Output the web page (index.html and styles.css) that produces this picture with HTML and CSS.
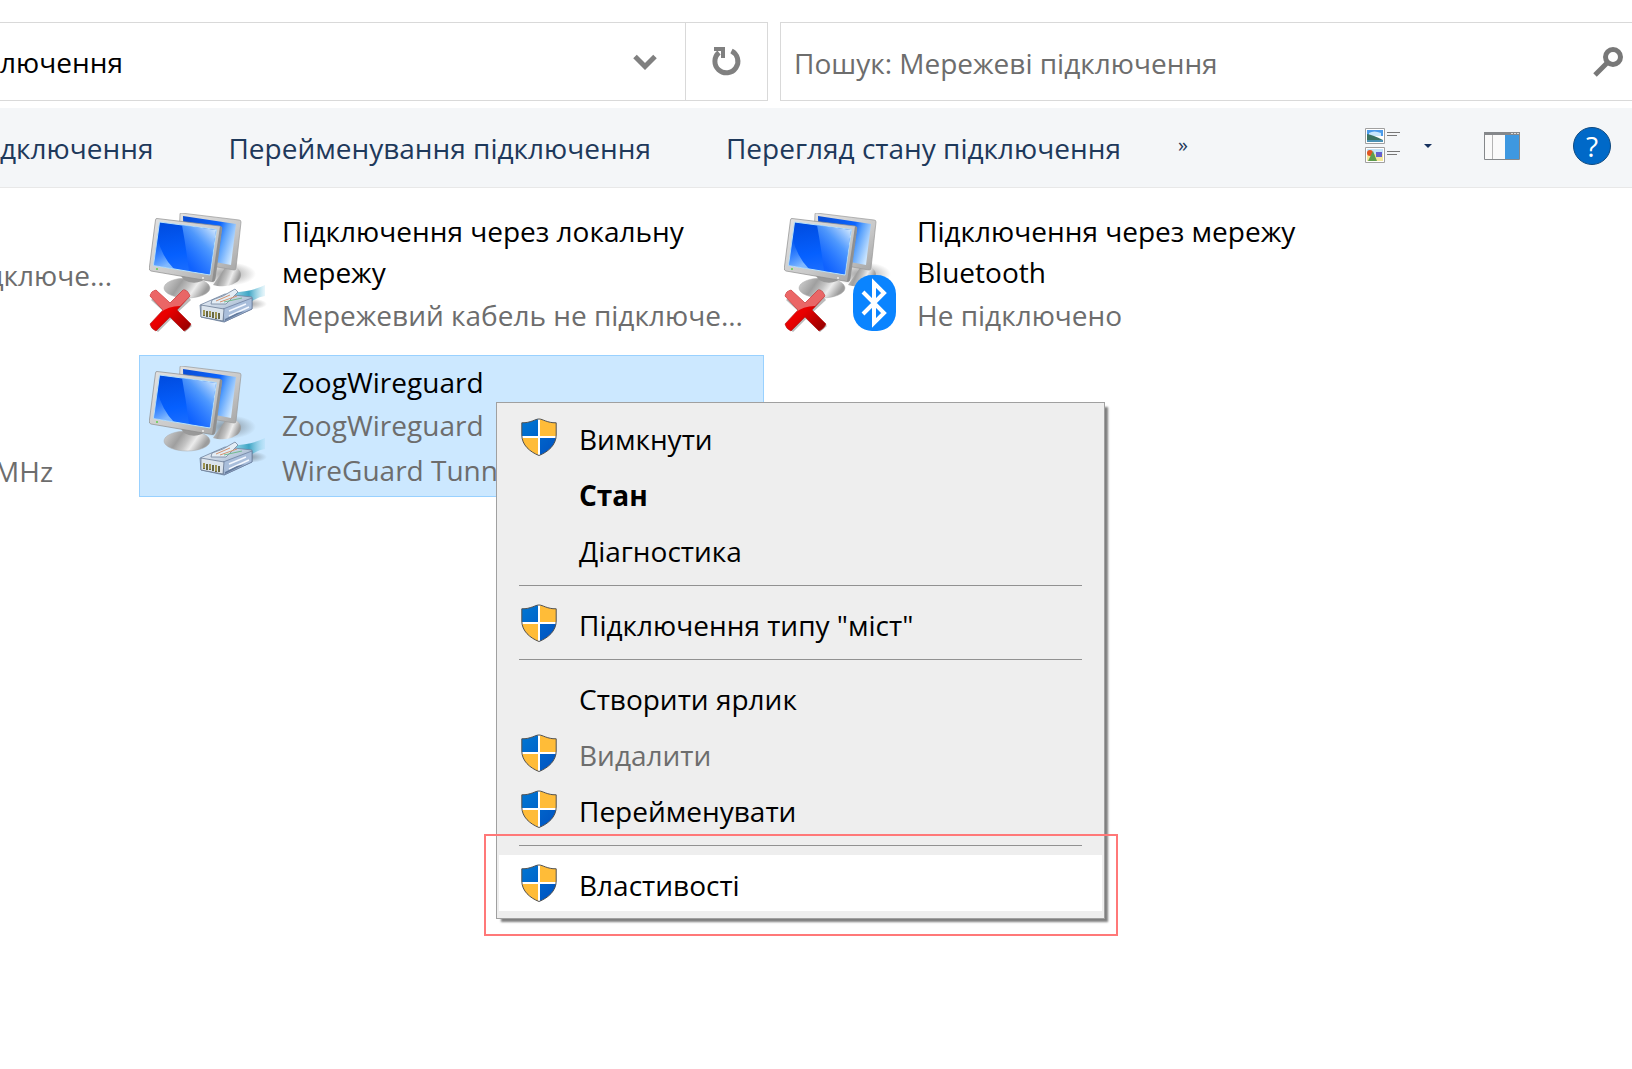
FILE: index.html
```html
<!DOCTYPE html>
<html lang="uk">
<head>
    <meta charset="UTF-8">
    <title>Мережеві підключення</title>
<link rel="stylesheet" href="styles.css">
</head>
<body>
<svg class="defs" aria-hidden="true">
    <defs>
        <linearGradient id="screen" x1="0" y1="0.3" x2="1" y2="0.6">
            <stop offset="0" stop-color="#0a4fd8"/>
            <stop offset="0.6" stop-color="#0a64ff"/>
            <stop offset="0.75" stop-color="#5aa2fc"/>
            <stop offset="1" stop-color="#cfe8ff"/>
        </linearGradient>
        <linearGradient id="screen_front" x1="0.3" y1="0" x2="0.5" y2="1">
            <stop offset="0" stop-color="#004ce0"/>
            <stop offset="0.6" stop-color="#0560ff"/>
            <stop offset="1" stop-color="#1f70ff"/>
        </linearGradient>
        <linearGradient id="glare" x1="0.95" y1="0" x2="0.3" y2="0.9">
            <stop offset="0" stop-color="#e4f3ff"/>
            <stop offset="0.45" stop-color="#62a8ff" stop-opacity="0.8"/>
            <stop offset="1" stop-color="#0a5cff" stop-opacity="0.6"/>
        </linearGradient>
        <linearGradient id="low_light" x1="0" y1="0.2" x2="0.3" y2="1">
            <stop offset="0" stop-color="#4c94ff" stop-opacity="0.1"/>
            <stop offset="1" stop-color="#9ccdff" stop-opacity="0.8"/>
        </linearGradient>
        <linearGradient id="frame" x1="0" y1="0" x2="1" y2="1">
            <stop offset="0" stop-color="#e2e2e2"/>
            <stop offset="0.6" stop-color="#c9c9c9"/>
            <stop offset="1" stop-color="#a4a4a4"/>
        </linearGradient>
        <linearGradient id="stand" x1="0" y1="0" x2="1" y2="0.3">
            <stop offset="0" stop-color="#d6d6d6"/>
            <stop offset="0.4" stop-color="#9f9f9f"/>
            <stop offset="0.6" stop-color="#c4c4c4"/>
            <stop offset="0.75" stop-color="#ececec"/>
            <stop offset="1" stop-color="#9c9c9c"/>
        </linearGradient>
        <radialGradient id="shadow">
            <stop offset="0" stop-color="#333" stop-opacity="0.5"/>
            <stop offset="1" stop-color="#333" stop-opacity="0"/>
        </radialGradient>
        <linearGradient id="cable" x1="0" y1="0" x2="1" y2="0">
            <stop offset="0" stop-color="#9bd9ea"/>
            <stop offset="0.5" stop-color="#3fa5c4"/>
            <stop offset="1" stop-color="#8fd4ea" stop-opacity="0.2"/>
        </linearGradient>
        <linearGradient id="plug" x1="0" y1="0" x2="1" y2="1">
            <stop offset="0" stop-color="#f4f8fc"/>
            <stop offset="0.5" stop-color="#b9c9dc"/>
            <stop offset="1" stop-color="#7189a9"/>
        </linearGradient>
        <linearGradient id="red" x1="0" y1="0" x2="1" y2="1">
            <stop offset="0" stop-color="#f00"/>
            <stop offset="0.5" stop-color="#e80000"/>
            <stop offset="1" stop-color="#8c0000"/>
        </linearGradient>
        <linearGradient id="blue_quarter" x1="0" y1="0" x2="1" y2="1">
            <stop offset="0" stop-color="#0078d4"/>
            <stop offset="1" stop-color="#0050c0"/>
        </linearGradient>
        <clipPath id="shield_clip"><path d="M18 1C22 1 26 5 35.200 4.800V17C35.200 27 27 34 18 37.500C9 34 .8 27 .8 17V4.800C10 5 14 1 18 1Z"/></clipPath>
    </defs>
    <symbol id="monitors" viewBox="0 0 120 120">
        <ellipse cx="78" cy="61" rx="29" ry="12" fill="url(#shadow)"/>
        <path d="M78 52L88 55C94 59 93 67 86 70C80 74 71 74 64 72Z" fill="url(#stand)"/>
        <path d="M31 1Q31 0 32 0L90 7Q92 7 92 9L87 55Q87 57 85 57L29 47Z" fill="url(#frame)" stroke="#999" stroke-width="0.700"/>
        <path d="M34 3L87 11L82 52L35 43Z" fill="url(#screen)"/>
        <ellipse cx="38" cy="75" rx="23" ry="10" fill="url(#stand)" stroke="#aaa" stroke-width="0.500"/>
        <path d="M30 60H60L53 68Q44 72 35 67Z" fill="#999"/>
        <path d="M8 5.500L71 13L73 14.500L66 66Q65.500 69 63 68.500L2 58Q0 57.500 .3 55L6.500 7Q6.700 5.300 8 5.500Z" fill="url(#frame)" stroke="#8c8c8c" stroke-width="0.700"/>
        <path d="M71 13L73 14.500L66 66Q65.500 69 63 68.500Z" fill="#8f8f8f"/>
        <path d="M10.500 9L67.500 16.500L61 62L4.500 52.500Z" fill="url(#screen_front)" stroke="#b9e2fa"/>
        <path d="M33 12L67 17L61 61L40 58Q37 34 33 12Z" fill="url(#glare)"/>
        <path d="M8 24Q13 44 25 56L5 52.500Z" fill="url(#low_light)"/>
        <circle cx="8" cy="56" r="1" fill="#5fd14a"/>
        <circle cx="54" cy="65" r="1" fill="#eee"/>
    </symbol>
    <symbol id="ethernet" viewBox="0 0 68 42">
        <ellipse cx="48" cy="20" rx="20" ry="6" fill="url(#shadow)"/>
        <path d="M34 8Q52 8 66 1V12Q57 13 47 22L38 18Z" fill="url(#cable)"/>
        <path d="M1 21L26 10L53 13V25L25 38L2 33Z" fill="url(#plug)" stroke="#6f83a0" stroke-width="0.800"/>
        <path d="M24 25L53 14V25L25 38Z" fill="#a9bedb" stroke="#66799a" stroke-width="0.700"/>
        <path d="M2 21L25 25L24 37L2 33Z" fill="#dbe4ed" stroke="#5d6f88" stroke-width="0.700"/>
        <path d="M13 16L24 12L36 5L39 8L31 16L27 20L12 20Z" fill="#e3edf5" stroke="#71839c" stroke-width="0.800"/>
        <path d="M17 17L31 11M21 18L38 12" stroke="#d49370"/>
        <path d="M25 18L43 14" stroke="#70b98f"/>
        <path d="M5 26V32M8 27V33M11 27V33M14 28V34M17 28V35M20 29V35" stroke="#5b5a31" stroke-width="1.800"/>
        <path d="M5 26V31M11 27V32M17 28V34" stroke="#dac45e"/>
        <path d="M30 27L47 20M30 32L50 23" stroke="#f4f8ff" stroke-width="1.500"/>
        <path d="M26 35L38 29L46 27L26 37Z" fill="#637a9c"/>
    </symbol>
    <symbol id="cross" viewBox="0 0 44 46">
        <path d="M9 5L22 18L36 5L42 12L29 24L43 38L36 44L22 31L9 44L2 38L15 24L2 12Z" fill="#555" opacity="0.400"/>
        <path d="M7 2L21 15L34 2Q38 1 41 8L28 22L42 36Q40 41 35 43L21 29L7 43Q2 41 1 36L14 22L1 8Q2 3 7 2Z" fill="url(#red)" stroke="#b02020" stroke-width="0.700"/>
        <path d="M7 2L21 15L34 2Q38 1 41 8L31 18Q19 18 11 25L14 22L1 8Q2 3 7 2Z" fill="#e98080" opacity="0.800"/>
    </symbol>
    <symbol id="bluetooth" viewBox="0 0 43 56">
        <rect width="43" height="56" rx="19" fill="#0a84ff"/>
        <path d="M10 17L31 38L21 48V8L31 18L10 39" fill="none" stroke="#fff" stroke-width="4"/>
    </symbol>
    <symbol id="shield" viewBox="0 0 36 38">
        <g clip-path="url(#shield_clip)">
            <rect width="36" height="38" fill="#fff"/>
            <path d="M0 0H17V18H0ZM19 20H36V38H19Z" fill="url(#blue_quarter)"/>
            <path d="M19 0H36V18H19ZM0 20H17V38H0Z" fill="#ffbc38"/>
        </g>
        <path d="M18 1C22 1 26 5 35.200 4.800V17C35.200 27 27 34 18 37.500C9 34 .8 27 .8 17V4.800C10 5 14 1 18 1Z" fill="none" stroke="#505050"/>
    </symbol>
</svg>
<header class="nav_bar">
    <div class="address">
        <span class="address_text">лючення</span>
        <button class="history" aria-label="Попередні розташування">
            <svg width="24" height="16" viewBox="0 0 24 16"><path d="M2 2.500L12 12.500L22 2.500" fill="none" stroke="#808080" stroke-width="5"/></svg>
        </button>
        <button class="refresh" aria-label="Оновити">
            <svg width="30" height="30" viewBox="0 0 30 30"><path d="M19.500 4A11.500 11.500 0 1 1 7 5.500" fill="none" stroke="#808080" stroke-width="5"/><path d="M2 0H13V11H9V4H2Z" fill="#808080"/></svg>
        </button>
    </div>
    <div class="search">
        <input type="search" aria-label="Пошук" placeholder="Пошук: Мережеві підключення">
        <button aria-label="Шукати">
            <svg width="30" height="30" viewBox="0 0 30 30"><circle cx="20" cy="10" r="7.500" fill="none" stroke="#787878" stroke-width="5"/><path d="M14.500 15.500L2 28" stroke="#787878" stroke-width="5"/></svg>
        </button>
    </div>
</header>
<nav class="toolbar">
    <button>дключення</button>
    <button>Перейменування підключення</button>
    <button>Перегляд стану підключення</button>
    <button class="more">»</button>
    <div class="tools">
        <button aria-label="Подання">
            <svg width="36" height="36" viewBox="0 0 36 36">
                <g fill="#fff" stroke="#a0a0a0"><path d="M.5 .5H19.500V15.500H.5ZM.5 19.500H19.500V34.500H.5Z"/></g>
                <path d="M2 2H18V8H2Z" fill="#4b9bea"/><path d="M4 5Q9 2 16 5V8H4Z" fill="#c9e6fb"/>
                <path d="M2 6Q8 7 18 12V14H2Z" fill="#3c7260"/><path d="M2 12H18V14H2Z" fill="#4a91b4"/>
                <path d="M2 21H18V33H2Z" fill="#f2e79b"/><path d="M2 21H18V26H2Z" fill="#c5e4f8"/>
                <rect x="11" y="24" width="6" height="5" fill="#6560cc"/><circle cx="5" cy="25" r="3" fill="#e25420"/><path d="M3 33L8 23L12 33Z" fill="#5e9c4d"/>
                <path d="M22 4.500H35M22 7.500H32M22 23.500H35M22 26.500H32" stroke="#777"/>
            </svg>
        </button>
        <button class="drop" aria-label="Інші подання">
            <svg width="8" height="4" viewBox="0 0 8 4"><path d="M0 0H8L4 4Z" fill="#15305e"/></svg>
        </button>
        <button class="pane" aria-label="Область перегляду">
            <svg width="36" height="28" viewBox="0 0 36 28">
                <path d="M.5 .5H35.500V27.500H.5Z" fill="#fafafa" stroke="#85888b"/>
                <path d="M0 0H36V3H0Z" fill="#85888b"/><path d="M27 1H29V2H27ZM30 1H32V2H30ZM33 1H35V2H33Z" fill="#ddd"/>
                <path d="M8.500 3V27" stroke="#b4b4b4"/><path d="M21 3H35V27H21Z" fill="#3e98e0"/>
            </svg>
        </button>
        <button class="help" aria-label="Довідка">?</button>
    </div>
</nav>
<main class="connections">
    <section class="tile clipped"><p class="detail">дключе...</p></section>
    <section class="tile">
        <div class="icon">
            <svg class="monitors"><use href="#monitors"/></svg>
            <svg class="cross"><use href="#cross"/></svg>
            <svg class="ethernet"><use href="#ethernet"/></svg>
        </div>
        <div class="info">
            <h2>Підключення через локальну мережу</h2>
            <p class="detail">Мережевий кабель не підключе...</p>
        </div>
    </section>
    <section class="tile">
        <div class="icon">
            <svg class="monitors"><use href="#monitors"/></svg>
            <svg class="cross"><use href="#cross"/></svg>
            <svg class="bluetooth"><use href="#bluetooth"/></svg>
        </div>
        <div class="info">
            <h2>Підключення через мережу Bluetooth</h2>
            <p class="detail">Не підключено</p>
        </div>
    </section>
    <section class="tile clipped adapter"><p class="detail">MHz</p></section>
    <section class="tile selected">
        <div class="icon">
            <svg class="monitors"><use href="#monitors"/></svg>
            <svg class="ethernet"><use href="#ethernet"/></svg>
        </div>
        <div class="info">
            <h2>ZoogWireguard</h2>
            <p class="detail">ZoogWireguard</p>
            <p class="detail">WireGuard Tunnel</p>
        </div>
    </section>
</main>
<div class="menu" role="menu">
    <button role="menuitem"><svg><use href="#shield"/></svg>Вимкнути</button>
    <button role="menuitem" class="default">Стан</button>
    <button role="menuitem">Діагностика</button>
    <hr>
    <button role="menuitem"><svg><use href="#shield"/></svg>Підключення типу "міст"</button>
    <hr>
    <button role="menuitem">Створити ярлик</button>
    <button role="menuitem" disabled><svg><use href="#shield"/></svg>Видалити</button>
    <button role="menuitem"><svg><use href="#shield"/></svg>Перейменувати</button>
    <hr>
    <button role="menuitem" class="active"><svg><use href="#shield"/></svg>Властивості</button>
    <div class="highlight"></div>
</div>
</body>
</html>
```
FILE: styles.css
```css
html, body {
    margin: 0;
    padding: 0;
}
body {
    font-family: "Segoe UI", "Open Sans", "Noto Sans", sans-serif;
    font-size: 28px;
    line-height: 40px;
    background: #fff;
    color: #000;
    overflow-x: hidden;
}
button, input {
    font: inherit;
    color: inherit;
    background: none;
    border: none;
    padding: 0;
    margin: 0;
}
svg {
    display: block;
}
.defs {
    position: absolute;
    width: 0;
    height: 0;
}
.nav_bar {
    display: flex;
    gap: 12px;
    padding: 22px 0 7px;
}
.address, .search {
    display: flex;
    align-items: center;
    box-sizing: border-box;
    height: 79px;
    border: 1px solid #d9d9d9;
}
.address {
    width: 768px;
    flex: none;
    border-left: none;
}
.address_text {
    flex: 1;
}
.history {
    padding: 0 28px;
}
.refresh {
    align-self: stretch;
    border-left: 1px solid #d9d9d9;
    padding: 0 25px 0 26px;
}
.search {
    flex: 1;
    border-right: none;
}
.search input {
    flex: 1;
    min-width: 0;
    padding: 2px 0 0 13px;
}
.search input::placeholder {
    color: #6d6d6d;
    opacity: 1;
}
.search button {
    padding-right: 9px;
}
.toolbar {
    display: flex;
    align-items: center;
    height: 79px;
    background: #f4f6f8;
    border-bottom: 1px solid #e8e8e8;
    color: #1e395b;
}
.toolbar > button {
    margin-right: 75px;
    white-space: nowrap;
}
.toolbar > .more {
    font-size: 20px;
    margin: 0 0 6px -18px;
}
.tools {
    display: flex;
    align-items: center;
    margin-left: auto;
    padding: 0 21px 4px 0;
}
.drop {
    padding: 0 52px 0 23px;
}
.help {
    width: 38px;
    height: 38px;
    margin-left: 53px;
    border: 1px solid #104a80;
    border-radius: 50%;
    background: #0069c8;
    color: #fff;
    line-height: 34px;
}
.connections {
    display: grid;
    grid-template-columns: 129px 625px 625px;
    grid-auto-rows: 142px;
    gap: 11px 10px;
    padding-top: 14px;
}
.tile {
    display: flex;
    align-items: center;
    box-sizing: border-box;
    border: 1px solid transparent;
    padding: 0 9px;
}
.tile.selected {
    background: #cce8ff;
    border-color: #99d1ff;
}
.tile.clipped {
    justify-content: flex-end;
    padding: 4px 17px 0 0;
    border: none;
}
.tile.adapter {
    align-items: flex-end;
    padding: 0 76px 3px 0;
}
.icon {
    position: relative;
    width: 120px;
    height: 120px;
    flex: none;
    margin-right: 13px;
}
.icon svg {
    position: absolute;
}
.monitors {
    width: 120px;
    height: 120px;
    left: 0;
    top: 0;
}
.cross {
    width: 44px;
    height: 46px;
    left: 0;
    top: 75px;
}
.ethernet {
    width: 68px;
    height: 42px;
    left: 50px;
    top: 71px;
}
.bluetooth {
    width: 43px;
    height: 56px;
    left: 69px;
    top: 62px;
}
.info {
    flex: 1;
    min-width: 0;
    padding-top: 3px;
}
.info h2 {
    margin: 0;
    font-size: 28px;
    font-weight: normal;
    line-height: 41px;
}
.detail {
    margin: 0;
    line-height: 45px;
    color: #6d6d6d;
    white-space: nowrap;
}
.menu {
    position: absolute;
    left: 496px;
    top: 402px;
    box-sizing: border-box;
    width: 609px;
    padding: 6px 2px 7px;
    background: #eee;
    border: 1px solid #a0a0a0;
    box-shadow: 4px 4px 2px -1px rgba(0, 0, 0, 0.5);
}
.menu button {
    display: flex;
    align-items: center;
    box-sizing: border-box;
    position: relative;
    width: 100%;
    height: 56px;
    padding: 3px 0 0 80px;
    text-align: left;
}
.menu button svg {
    position: absolute;
    left: 22px;
    top: 9px;
    width: 36px;
    height: 38px;
}
.menu hr {
    margin: 8px 20px 9px;
    border: none;
    border-top: 1px solid #919191;
}
.menu .default {
    font-weight: bold;
}
.menu button:disabled {
    color: #6d6d6d;
}
.menu .active {
    background: #fff;
}
.highlight {
    position: absolute;
    left: -13px;
    right: -14px;
    bottom: -18px;
    height: 98px;
    border: 2px solid #ff7878;
    pointer-events: none;
}
```
